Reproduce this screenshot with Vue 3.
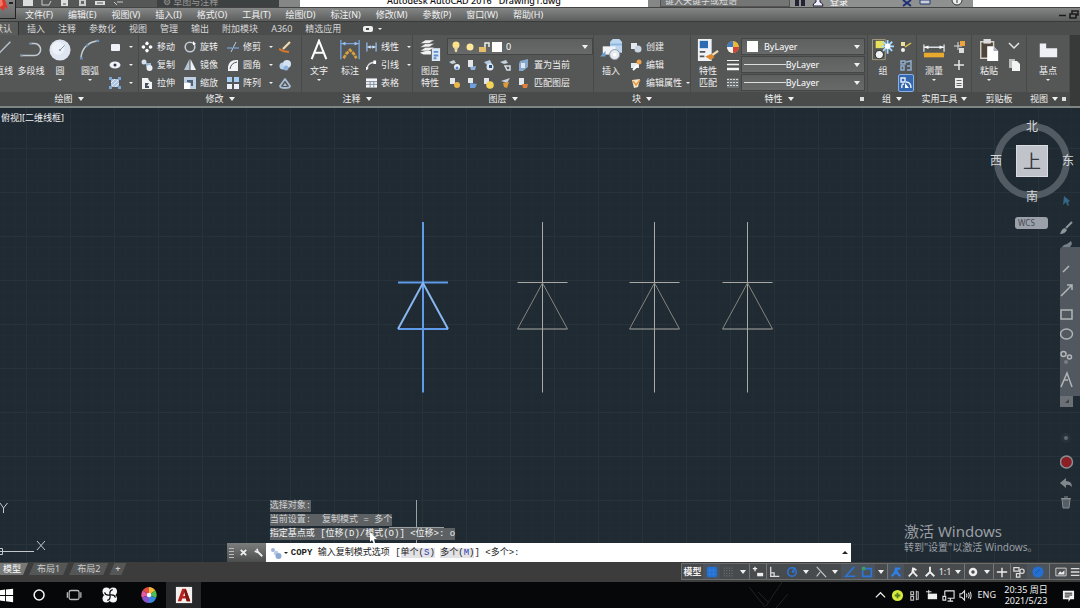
<template>
  <div class="app">
    <!-- Title bar -->
    <header class="titlebar">
      <button class="app-menu" aria-label="AutoCAD"><Icon name="acad" box="0 0 15 18" /></button>
      <div class="quick">
        <Icon v-for="n in quickIcons" :key="n" :name="n" box="0 0 12 8" />
      </div>
      <div class="workspace">⚙ 草图与注释</div>
      <div class="title-edge"></div>
      <h1 class="title">Autodesk AutoCAD 2016 &nbsp; Drawing1.dwg</h1>
      <div class="title-edge small"></div>
      <div class="search">键入关键字或短语</div>
      <div class="account">
        <Icon name="binoc" box="0 0 12 8" />
        <Icon name="user" box="0 0 12 8" />
        <span>登录</span>
        <Icon name="exchange" box="0 0 12 8" class="push" />
        <Icon name="cart" box="0 0 12 8" />
        <Icon name="help" box="0 0 12 8" class="help" />
      </div>
      <div class="window-blank"></div>
    </header>

    <nav class="menubar">
      <button v-for="m in menus" :key="m">{{ m }}</button>
      <Icon name="restore" box="0 0 22 10" class="mdi" />
    </nav>

    <nav class="tabs">
      <button v-for="(t, i) in tabs" :key="t" :class="{ active: i === 0 }">{{ t }}</button>
      <button class="tab-extra" aria-label="最小化"><Icon name="pill" box="0 0 10 6" /><i class="caret tiny"></i></button>
    </nav>

    <!-- Ribbon -->
    <section class="ribbon">
      <div v-for="p in panels" :key="p.title" class="panel" :class="p.id">
        <div class="panel-body">
          <button v-for="b in p.big" :key="b.label" class="big" :class="b.icon">
            <Icon :name="b.icon" box="0 0 24 24" />
            <span>{{ b.label }}</span>
            <i v-if="b.caret" class="caret tiny"></i>
          </button>

          <div v-if="p.id === 'layers'" class="layer-tools">
            <label class="combo">
              <Icon name="bulb" box="0 0 12 12" />
              <Icon name="sun" box="0 0 12 12" />
              <Icon name="unlock" box="0 0 12 12" />
              <i class="swatch"></i>
              <select aria-label="图层"><option>0</option></select>
              <i class="caret"></i>
            </label>
            <div v-for="(row, r) in layerRows" :key="r" class="layer-row">
              <button v-for="n in row.icons" :key="n" :aria-label="n"><Icon :name="n" box="0 0 12 12" /></button>
              <span>{{ row.label }}</span>
            </div>
          </div>

          <div v-for="(col, c) in p.cols" :key="c" class="col">
            <button v-for="s in col" :key="s.icon" class="small" :class="{ on: s.on }" :aria-label="s.label || s.icon">
              <Icon :name="s.icon" box="0 0 12 12" />
              <span v-if="s.label">{{ s.label }}</span>
              <i v-if="s.caret" class="caret tiny"></i>
            </button>
          </div>

          <div v-if="p.id === 'props'" class="prop-combos">
            <label class="combo">
              <i class="swatch"></i>
              <select aria-label="颜色"><option>ByLayer</option></select>
              <i class="caret"></i>
            </label>
            <label v-for="n in ['线宽', '线型']" :key="n" class="combo lines">
              <i class="rule"></i>
              <select :aria-label="n"><option>ByLayer</option></select>
              <i class="caret"></i>
            </label>
          </div>
        </div>
        <div class="panel-title">
          {{ p.title }}<i v-if="!p.plain" class="caret"></i>
          <Icon v-if="p.corner" name="corner" box="0 0 6 6" class="corner" />
        </div>
      </div>
      <div class="ribbon-rest"></div>
    </section>

    <!-- Model space -->
    <main class="canvas">
      <svg class="drawing" width="100%" height="100%">
        <g v-for="d in diodes" :key="d.x" :class="['diode', { selected: d.selected }]">
          <path :d="diodePath(d.x)" />
          <path class="sides" :d="sidePath(d.x)" />
        </g>
      </svg>
      <div class="view-label">俯视][二维线框]</div>

      <div class="viewcube">
        <svg class="ring" viewBox="0 0 84 84"><circle cx="42" cy="42" r="34.5" /></svg>
        <span class="n">北</span>
        <span class="w">西</span>
        <button class="top">上</button>
        <span class="e">东</span>
        <span class="s">南</span>
      </div>
      <button class="wcs">WCS</button>

      <div class="pen-tools">
        <Icon name="penTop" box="0 0 20 60" class="pen-top" />
        <Icon name="penBox" box="0 0 20 162" class="pen-box" />
        <Icon name="penLow" box="0 0 20 90" class="pen-low" />
      </div>

      <svg class="ucs" viewBox="0 0 50 60">
        <path d="M0 50.500H34M0 47.500H2.500V53.500H0M37 40l8 9M45 40l-8 9M0 2l3.500 5 4-5M3.500 7v5" />
      </svg>
      <svg class="cross" viewBox="0 0 56 46"><path d="M27.500 0V44M0 27.500H55" /></svg>

      <div class="watermark">
        <p class="wm-big">激活 Windows</p>
        <p>转到"设置"以激活 Windows。</p>
      </div>

      <div class="command">
        <div class="history">
          <p v-for="h in history" :key="h"><span>{{ h }}</span></p>
        </div>
        <div class="cmdline">
          <div class="grip"></div>
          <button class="cmd-btn" aria-label="关闭"><Icon name="close" box="0 0 10 10" /></button>
          <button class="cmd-btn" aria-label="自定义"><Icon name="wrench" box="0 0 12 12" /></button>
          <label class="cmd-input" for="cmd">
            <Icon name="copyCmd" box="0 0 12 12" />
            <i class="caret tiny dark"></i>
            <span class="prompt"><b>COPY</b> 输入复制模式选项 [<u>单个(<em>S</em>)</u> <u>多个(<em>M</em>)</u>] &lt;多个&gt;:</span>
            <input id="cmd" type="text" />
            <i class="caret up dark"></i>
          </label>
        </div>
      </div>
      <svg class="pointer" viewBox="0 0 8 12"><path d="M1 0v10l2-2 2 4 1-1-1-4h3z" /></svg>
    </main>

    <!-- Layout tabs and status bar -->
    <footer class="statusbar">
      <nav class="layouts">
        <button class="active">模型</button>
        <button>布局1</button>
        <button>布局2</button>
        <button class="add">+</button>
      </nav>
      <div class="status">
        <button v-for="(s, i) in status" :key="i" :class="[s.kind, { edge: s.edge, hot: s.hot }]" :aria-label="s.icon || s.text || '更多'">
          <Icon v-if="s.icon" :name="s.icon" box="0 0 14 14" />
          <template v-else-if="s.text">{{ s.text }}</template>
          <i v-else class="caret"></i>
        </button>
      </div>
    </footer>

    <div class="taskbar">
      <button v-for="t in tasks" :key="t" class="task" :class="t" :aria-label="t"><Icon :name="t" box="0 0 20 20" /></button>
      <svg class="streaks" viewBox="0 0 130 26"><path d="M5 5l16 20M38 0L22 24M44 12l-12 14M14 10l10 10" /></svg>
      <div class="tray">
        <Icon v-for="t in tray" :key="t" :name="t" box="0 0 14 14" />
        <span class="lang">ENG</span>
        <div class="clock">
          <span>20:35 周日</span>
          <span>2021/5/23</span>
        </div>
        <Icon name="note" box="0 0 14 14" class="note" />
      </div>
    </div>
  </div>
</template>

<script setup>
import { h } from 'vue';

const icons = {
  // title bar
  acad: '<path fill="#d8382c" d="M0 0h5l3 9-3-2-1 4-4-3z"/><path fill="#f07866" d="M0 0h2l1 5-3 2z"/><path fill="#222" d="M9 2h4v2H9z"/>',
  qNew: '<path fill="#ddd" d="M1 0h10v6H1z"/>',
  qOpen: '<path fill="none" stroke="#ccc" d="M2 0v5h7l2-4"/>',
  qSave: '<path fill="#ddd" d="M3 0h7v6H3z"/><path stroke="#555" d="M5 4h3"/>',
  qSaveAs: '<path fill="#ccc" d="M3 0h7v6H3z"/><path fill="#666" d="M5 1h3v3H5z"/>',
  qPrint: '<path fill="#ddd" d="M1 1h10v4H1z"/><path stroke="#555" d="M3 3h6"/>',
  qUndo: '<path fill="none" stroke="#ccc" d="M2 2l3 3M5 2h6"/>',
  binoc: '<path fill="none" stroke="#223" stroke-width="2" d="M2 7V1h2v6M8 7V1h2v6"/>',
  user: '<path fill="#eef" stroke="#223" d="M1 7q0-3 3-4V0h4v3q3 1 3 4z"/>',
  exchange: '<path stroke="#1d2f74" stroke-width="2" d="M2 1l8 6M10 1L2 7"/>',
  cart: '<path fill="#ccd" stroke="#223c6b" d="M1 1h10v4H1z"/>',
  help: '<circle cx="6" cy="1" r="5" fill="#eee" stroke="#333"/><path stroke="#333" d="M6 0v4"/>',
  restore: '<path fill="none" stroke="#1c1c1c" stroke-width="1.600" d="M1 5.500h7M12 4h6v4h-6zM14 3.500V1h6v4h-2"/>',
  pill: '<rect width="10" height="6" rx="2" fill="#eee"/><path fill="#444" d="M3 2h3v2H3z"/>',
  corner: '<path fill="#ddd" d="M1 1h4v4H1z"/>',
  // draw
  line: '<path stroke="#b9c4cd" stroke-width="1.500" d="M2 20L19 3"/>',
  pline: '<path fill="none" stroke="#c3ccd3" stroke-width="1.700" d="M1 18h15a6.500 6.500 0 0 0 0-13h-4"/><path stroke="#7f95aa" stroke-width="2" d="M0 18h3M10 5h3"/>',
  circle: '<circle cx="12" cy="12" r="11.500" fill="#dfe6f2"/><circle cx="10" cy="10" r="7" fill="#edf1f8"/><path stroke="#7d8da5" d="M12 12l5-5"/><circle cx="12" cy="12" r="1" fill="#7d8da5"/>',
  arc: '<path fill="none" stroke="#c3ccd3" stroke-width="1.700" d="M2 21Q4 4 21 2"/><path stroke="#6d91b5" stroke-width="2.500" d="M1 21h3M8 8l2-2M19 2h3"/>',
  rect: '<rect x="2" y="3" width="9" height="7" rx="1" fill="#eef1f6"/>',
  ellipse: '<ellipse cx="6" cy="6" rx="5.500" ry="3.500" fill="#eef1f6"/><circle cx="6" cy="6" r="1.500" fill="#334"/>',
  hatch: '<path fill="#a9c4e4" d="M2 2h8v8H2z"/><path stroke="#e6edf5" d="M2 6l4-4M3 9l6-6M6 10l4-4"/><path fill="#7ba4cf" d="M0 0h3v3H0zM9 0h3v3H9zM0 9h3v3H0zM9 9h3v3H9z"/>',
  // modify
  move: '<path fill="#e8ecf2" d="M4.500 3L6 0l1.500 3zM4.500 9L6 12l1.500-3zM3 4.500L0 6l3 1.500zM9 4.500L12 6 9 7.500z"/><circle cx="6" cy="2.500" r="1.700" fill="#fff"/><circle cx="6" cy="9.500" r="1.700" fill="#fff"/><circle cx="2.500" cy="6" r="1.700" fill="#fff"/><circle cx="9.500" cy="6" r="1.700" fill="#fff"/>',
  copy: '<circle cx="3" cy="3" r="2.500" fill="#d6dfeb"/><path fill="#96b4d6" d="M5 4h5v4H5z"/><circle cx="8.500" cy="9" r="3" fill="#e9eef5"/>',
  stretch: '<path fill="#f0f2f6" d="M1 1h6q1 4 4 4v7H1z"/><path fill="#46505c" d="M4 6h4l-2 3h2v2H4z"/>',
  rotate: '<circle cx="6" cy="6" r="4.800" fill="none" stroke="#c2cbd6" stroke-width="1.600"/><path fill="#fff" d="M9 0l3 3-3 1z"/>',
  mirror: '<path fill="#b6c5d6" d="M5.500 0v11H0z"/><path fill="#eef2f7" d="M6.500 0v11H12z"/>',
  scale: '<path fill="#bfd0e4" d="M0 0h12v12H0z"/><path fill="#4f6275" d="M3 3h6v6H7V6L3 5z"/><path fill="#fff" d="M0 6h6v6H0z"/>',
  trim: '<path stroke="#6f97c4" stroke-width="1.500" d="M0 7h5M7 7h5"/><path stroke="#b9cde5" d="M4 11L9 1"/>',
  fillet: '<path fill="#f2f4f8" d="M1 12V8q1-7 8-7h2v11z"/><path fill="none" stroke="#555" d="M3 10q1-6 7-7"/>',
  array: '<path fill="#a6cdf4" d="M0 0h5v5H0zM7 0h5v5H7z"/><path fill="#e9f0f8" d="M0 7h5v5H0zM7 7h5v5H7z"/>',
  erase: '<path stroke="#f0dcae" stroke-width="2.200" d="M4 8l7-7"/><path stroke="#d8792a" stroke-width="2" d="M0 8l4 2 6 1"/>',
  explode: '<circle cx="4" cy="7" r="3.500" fill="#b9d2ee"/><circle cx="8" cy="5" r="4" fill="#d4e2f3"/><circle cx="7" cy="9" r="2.500" fill="#8fb3da"/>',
  offset: '<path fill="none" stroke="#a9bdd2" stroke-width="1.800" stroke-linejoin="round" d="M6 2L1 9q0 2 5 2t5-2z"/><path fill="#a9bdd2" d="M6 6L4 9h4z"/>',
  // annotate
  text: '<path fill="none" stroke="#fff" stroke-width="2.200" d="M4 22L12 2l8 20M7 15h10"/>',
  dim: '<path stroke="#74a2dc" stroke-width="1.500" d="M2 1v21M22 1v21M2 5h20"/><path fill="none" stroke="#dba13f" stroke-width="3" stroke-dasharray="4 1" d="M5 21l3-5 4-4 4 4 3 5"/><path fill="#9ec3ef" d="M3 5l4-2v4zM21 5l-4-2v4z"/>',
  linear: '<path stroke="#8db4e4" stroke-width="1.500" d="M1 1v10M11 1v10M1 6h10"/><path fill="#dce8f6" d="M2 6l3-2v4zM10 6L7 4v4z"/>',
  leader: '<path fill="none" stroke="#d5dbe2" stroke-width="1.400" d="M1 11q0-7 8-8"/><path fill="#fff" d="M0 12V8l3 1zM8 1h3v4H8z"/>',
  table: '<path fill="#f2f4f7" d="M0 1h12v10H0z"/><path stroke="#7c8794" d="M0 4.500h12M0 7.500h12M4.500 4v7M8.500 4v7"/>',
  // layers
  layerProps: '<path fill="#f2f2f2" stroke="#555" stroke-width=".6" d="M1 13l6-4h10l-6 4zM1 9l6-4h10l-6 4zM1 5l6-4h10l-6 4z"/><path fill="#f2f2f2" d="M1 15l6-2h6v4H5z"/><path fill="#dce7f5" d="M14 10h9v14h-9z"/><path stroke="#5d8fca" stroke-width="2" d="M16 14h5M16 18h5M16 21h3"/>',
  bulb: '<circle cx="6" cy="4" r="3.500" fill="#ffe28a"/><path fill="#e8d7a1" d="M4 6h4l-1 5H5z"/>',
  sun: '<circle cx="6" cy="6" r="3.500" fill="#ffe89a"/>',
  unlock: '<path fill="#e5bf69" d="M1 6h7v5H1z"/><path fill="none" stroke="#eee" stroke-width="1.500" d="M7 6V2h4v4"/>',
  l1: '<path fill="#c6d1dc" d="M0 3l5-2 2 3-4 1z"/><circle cx="8" cy="8" r="3" fill="#e9eff6"/><circle cx="8" cy="9" r="1.500" fill="#4781c7"/>',
  l2: '<path fill="#e2e7ec" d="M2 1h5v7H2z"/><path fill="#8fb2dc" d="M4 8l6-1-1 4H5z"/>',
  l3: '<path fill="#b7c9de" d="M1 3l6-2 2 4-5 1z"/><circle cx="7" cy="8" r="3.500" fill="#dfe8f3"/><path fill="#27507e" d="M6 6h3v3H6z"/>',
  l4: '<path fill="#c6d1dc" d="M0 3l6-2 2 3-4 1z"/><path fill="none" stroke="#d6e0eb" stroke-width="1.500" d="M5 7h5v4H7z"/>',
  l5: '<path fill="#86a8cd" d="M3 2l8-2v8l-5 4H2V5z"/><path fill="#dce7f2" d="M4 4h4v5H4z"/>',
  l6: '<path fill="#e2e7ec" d="M1 1h5v6H1z"/><circle cx="8" cy="8" r="3" fill="#eab54b"/>',
  l7: '<path fill="#e2e7ec" d="M2 1h5v5H2z"/><path fill="#6e9edc" d="M4 6l7 1-2 4H4z"/>',
  l8: '<path fill="#dfe5eb" d="M1 1h5v6H1z"/><circle cx="7" cy="8" r="3.800" fill="#f5d359"/>',
  l9: '<path fill="#c6d1dc" d="M1 4l9-3-3 5z"/><path fill="#dd9a35" d="M3 6l6-1-2 6-3-1z"/>',
  l10: '<path fill="#e2e7ec" d="M2 1h5v7H2z"/><path fill="#df7f3e" d="M5 7h6l-1 4H6z"/>',
  // block
  insert: '<path fill="#bcd6ef" d="M11 3l3-3h7l3 3v12H11z"/><path fill="#8db7dd" d="M11 5h13v2H11z"/><path fill="#f0f3f7" d="M3 8h14v9H3z"/><path fill="#6f9fd0" d="M0 19l6-6v6z"/><circle cx="16" cy="17" r="5.500" fill="#e6e9ee" stroke="#8b95a3"/><circle cx="16" cy="17" r="2" fill="#fff"/>',
  bCreate: '<path fill="#e5eaf0" d="M1 2h6v6H1z"/><circle cx="8" cy="8" r="3.500" fill="#cbd6e3"/>',
  bEdit: '<path fill="#e5eaf0" d="M1 4h8v5H1z"/><circle cx="9" cy="3" r="2.500" fill="#f0a34c"/><path stroke="#fff" stroke-width="2" d="M3 11l5-5"/>',
  bAttr: '<path fill="#f3e6cf" d="M2 3l8-1-2 8-4 1z"/><path fill="none" stroke="#e79b3c" stroke-width="1.500" d="M3 4l3 4 4-5"/>',
  // properties
  matchProps: '<path fill="#eef2f6" d="M1 0h15v24H1z"/><path fill="#2d6cb3" d="M3 2h9v8H3z"/><path stroke="#555" stroke-width="2" d="M3 14h6M3 19h5"/><path stroke="#f0dcb4" stroke-width="2.500" d="M16 18l7-5"/><path fill="#dd8a2e" d="M9 19l7-3 3 4-4 3z"/>',
  wheel: '<circle cx="6" cy="6" r="6" fill="#e8ba3a"/><path fill="#3f76c5" d="M6 6H0a6 6 0 0 1 6-6z"/><path fill="#cb4639" d="M6 6h6a6 6 0 0 1-6 6z"/><path fill="#f3f3f3" d="M6 6v6a6 6 0 0 1-6-6z"/>',
  weights: '<path stroke="#f4f4f4" d="M0 1.500h12"/><path stroke="#f4f4f4" stroke-width="1.600" d="M0 5.500h12"/><path stroke="#f4f4f4" stroke-width="2.500" d="M0 10h12"/>',
  ltypes: '<path fill="#6c7274" d="M0 1h12v10H0z"/><path stroke="#d7dada" stroke-dasharray="2 1" d="M0 2.500h12M0 5.500h12M0 8.500h12"/>',
  // group
  group: '<path fill="none" stroke="#aaa17e" d="M.5.500h14v22H.5z"/><path fill="#e8e15a" d="M4 2h9v8H4z"/><circle cx="8" cy="17" r="4.500" fill="#f0f2f5" stroke="#222"/><path stroke="#a8dcff" stroke-width="2" d="M17 1v15M10 8h14M12 3l10 10M22 3L12 13"/><circle cx="17" cy="8" r="3" fill="#fff"/>',
  ungroup: '<path fill="#e8e1a0" d="M1 1h4v4H1z"/><path stroke="#e2c24d" stroke-width="1.500" d="M5 6l6-4"/><circle cx="3" cy="9" r="2" fill="#f2f2f2"/>',
  groupEdit: '<path fill="none" stroke="#8faed0" stroke-width="1.500" d="M1 2h4v3H1zM6 3l5-1v4M7 7h4v4H7M1 7h3v4H1z"/>',
  groupSel: '<path fill="none" stroke="#e6eefa" stroke-width="1.400" d="M1 1h4v4H1zM2 11q-1-4 2-4M6 5q5 0 5 6"/><path fill="#fff" d="M5 6l4 5H5z"/>',
  // utilities, clipboard, view
  measure: '<path stroke="#d7dde2" stroke-width="1.500" d="M1 6v8M23 6v8M1 9h22"/><path fill="#fff" d="M1 9l5-2v4zM23 9l-5-2v4z"/><path fill="#e9a92f" d="M1 15h22v5H1z"/>',
  quickSel: '<path stroke="#ddd" d="M5 1v8M1 5h8"/><path fill="#eda23d" d="M7 0h5v5H7z"/><path fill="#ddd" d="M6 7h5v5H6z"/>',
  point: '<path stroke="#e6e6e6" stroke-width="1.500" d="M6 1v10M1 6h10"/>',
  calc: '<path fill="#eee" d="M2 1h8v10H2z"/><path stroke="#666" d="M3.500 3.500h5M3.500 6.500h5M3.500 8.500h5"/>',
  paste: '<path fill="#4f473b" stroke="#d7d2c7" stroke-width="1.500" d="M3 3h14v18H3z"/><path fill="#ddd" d="M6 0h8v5H6z"/><path fill="#fff" d="M10 8h7l5 5v11H10z"/><path fill="#aab" d="M17 8v5h5z"/>',
  cut: '<path fill="none" stroke="#e3e3e3" stroke-width="1.500" d="M1 2l5 5 5-5"/>',
  copyClip: '<path fill="#bbb" d="M1 0h6v9H1z"/><path fill="#f3f3f3" d="M4 2h5l3 3v7H4z"/>',
  base: '<path fill="#eef0f3" d="M3 5h7v5h12v10H3z"/>',
  // command line
  close: '<path stroke="#eee" stroke-width="2" d="M2 2l6 6M8 2L2 8"/>',
  wrench: '<path fill="none" stroke="#eee" stroke-width="2.400" d="M11 11L5 5M5 6L1 4M5 5L4 1"/>',
  copyCmd: '<circle cx="3" cy="3" r="2" fill="#9db5da"/><circle cx="6" cy="6" r="2.300" fill="#b9cbe5"/><circle cx="8.500" cy="9" r="3" fill="#8aa8d2"/>',
  // pen toolbar
  penTop: '<path fill="#356884" d="M4 4l6 5-2 1 1 4-2-1-1-3-3 3z"/><path fill="#8f969a" d="M0 42q2-6 5-6l2 2q-2 4-7 4z"/><path stroke="#8f969a" stroke-width="2" d="M6 36l6-6"/><path fill="#75808a" d="M1 60q0-5 3-7l3-1 4-3 1 3-4 6z"/>',
  penBox: '<path fill="#52585f" d="M0 3q0-3 3-3h17v149H0z"/><path fill="#6a7075" d="M0 149h13v11H0z"/><g fill="none" stroke="#b1b5b8" stroke-width="1.500"><path d="M3 25l6-6M1 49L12 38M7 38h5v5M1 63h11v9H1z"/><ellipse cx="6.500" cy="87" rx="6" ry="5"/><circle cx="3.500" cy="107" r="2.500"/><circle cx="9.500" cy="110" r="2"/><path d="M1 140l6-14 5 14M4 133h4"/></g><circle cx="6" cy="115" r="2" fill="#777e84"/><path fill="#3c4146" d="M5 156l4-4v4z"/>',
  penLow: '<circle cx="6" cy="10" r="5" fill="#29323b"/><circle cx="6" cy="10" r="2" fill="#626b72"/><circle cx="6.500" cy="34" r="6" fill="#8b1f26" stroke="#8b8e91" stroke-width="1.500"/><path fill="#81888d" d="M0 55l6-5v3q6 0 6 6-3-3-6-2v3z"/><path fill="#555e65" stroke="#858b90" d="M2 71h8l-1 9H3zM1 70.500h10M4 69h4"/>',
  // status bar
  snapGrid: '<rect x="1" y="1" width="12" height="12" rx="2" fill="#2470cf"/><path stroke="#3380dd" d="M4.500 2v10M8.500 2v10M2 5.500h10M2 9.500h10"/>',
  dots: '<path stroke="#8b8f91" stroke-dasharray="1 2" d="M1 2.500h12M1 5.500h12M1 8.500h12M1 11.500h12"/>',
  dyn: '<path stroke="#eee" stroke-width="1.500" d="M1 3h5M3.500 1v5"/><path fill="#eee" d="M6 8h7v4H6z"/>',
  ortho: '<path fill="none" stroke="#ddd" stroke-width="1.500" d="M2 1v11h10M2 8h4v4"/>',
  polar: '<circle cx="7" cy="7" r="5" fill="none" stroke="#2b76d8" stroke-width="1.800"/><path stroke="#2b76d8" stroke-width="1.800" d="M7 7h3M7 7l4-5"/>',
  iso: '<path stroke="#ccc" stroke-width="1.300" d="M2 1l11 12M6 7L2 12"/>',
  track: '<path fill="none" stroke="#2b76d8" stroke-width="1.800" d="M12 1L2 12h11"/>',
  osnap: '<path fill="none" stroke="#2b76d8" stroke-width="2" d="M2 3h10v9H2z"/><path fill="#3d9a62" d="M1 1h4v4H1z"/>',
  annoBlue: '<path fill="none" stroke="#2f80ea" stroke-width="2.500" d="M2 12l4-4 1-6 1 6 4 4M4 8h6M8 3h4"/>',
  anno: '<path fill="none" stroke="#eee" stroke-width="2" d="M2 12l4-4 1-6 1 6 4 4M8 3l3 2"/>',
  person: '<path fill="none" stroke="#eee" stroke-width="2.200" d="M7 1v6l-5 5M7 7l5 5"/>',
  gear: '<circle cx="7" cy="7" r="3.500" fill="none" stroke="#eee" stroke-width="3"/>',
  plus: '<path stroke="#eee" stroke-width="1.600" d="M7 2v11M1 7h12"/>',
  units: '<path fill="none" stroke="#ddd" stroke-width="1.400" d="M1 2h6v4H1zM4 9h4v4H4z"/><circle cx="10.500" cy="6" r="2.500" fill="none" stroke="#ddd" stroke-width="1.400"/>',
  hw: '<circle cx="7" cy="7" r="6.500" fill="#2470d2"/><path stroke="#174d94" d="M4 9l5-5"/>',
  screen: '<path fill="#505356" stroke="#ddd" d="M1 2.500h12v9H1z"/><path fill="#eee" d="M3 10l3-4 2 2 3-3v5z"/>',
  custom: '<path stroke="#ddd" stroke-width="1.500" d="M1 3h10M1 7h10M1 11h10"/>',
  // taskbar
  win: '<path fill="#fff" d="M3 5l7-1v6H3zM11 4l8-1v7h-8zM3 11h7v6l-7-1zM11 11h8v7l-8-1z"/>',
  cortana: '<circle cx="9" cy="10" r="5.500" fill="none" stroke="#f4f4f4" stroke-width="1.700"/>',
  taskview: '<rect x="3.500" y="5" width="11" height="10" rx="2" fill="none" stroke="#bbb" stroke-width="1.400"/><path stroke="#bbb" stroke-width="1.400" d="M1.500 7v6M16.500 7v6"/>',
  fan: '<g fill="#f5f5f5"><circle cx="6" cy="6" r="4.300"/><circle cx="13.500" cy="6" r="4.300"/><circle cx="6" cy="14" r="4.300"/><circle cx="13.500" cy="14" r="4.300"/><circle cx="10" cy="10" r="4"/></g><path fill="none" stroke="#050708" stroke-width="1.300" d="M10 10Q5 11 4 7M10 10q-1-5 3-6M10 10q5-1 6 3M10 10q1 5-3 6"/>',
  color: '<path fill="#e34d45" d="M10 10L3 5a9 9 0 0 1 7-4z"/><path fill="#efbb35" d="M10 10V1a9 9 0 0 1 7 4z"/><path fill="#e35aa0" d="M10 10L3 5a9 9 0 0 0-1 8z"/><path fill="#8853c9" d="M10 10l-8 3a9 9 0 0 0 8 6z"/><path fill="#3488df" d="M10 10v9a9 9 0 0 0 8-6z"/><path fill="#53bd59" d="M10 10l7-5a9 9 0 0 1 1 8z"/><circle cx="10" cy="10" r="2.500" fill="#f7f7f7"/>',
  autocad: '<path fill="#f4f0ee" d="M1 1h18v18H1z"/><path fill="#b8241f" d="M3 17L8 3h4l5 14h-4l-1-3H8l-1 3zM9 11h3l-1-5z"/><path fill="#7e1512" d="M12 3l5 14h-4l-3-11z"/>',
  up: '<path fill="none" stroke="#eee" stroke-width="1.300" d="M2 9l5-5 5 5"/>',
  safe: '<circle cx="7" cy="7" r="6" fill="#d9e83c"/><path fill="#547b20" d="M6 4h2v2h2v2H8v2H6V8H4V6h2z"/>',
  bt: '<path fill="none" stroke="#bbb" stroke-width="1.200" d="M3 3h3v3H3zM3 8h3v4H3zM9 2v10M9 3h2v8H9"/>',
  battery: '<path fill="#eee" d="M3 5h10v6H3z"/><path fill="none" stroke="#eee" d="M1 3h6M4 1v4"/>',
  net: '<path fill="none" stroke="#e5e5e5" stroke-width="1.200" d="M3 2h10v8H6M3 2v5M9 10v3M6 13h6M1 8h3v4H1z"/>',
  sound: '<path fill="none" stroke="#e5e5e5" stroke-width="1.100" d="M1 5h2l3-3v10L3 9H1zM8 5q1 2 0 4M10 4q2 3 0 6M12 3q2 4 0 8"/>',
  note: '<path fill="#f4f4f4" d="M1 2h12v9H9l-2 3v-3H1z"/><path stroke="#111" d="M3 4.500h8M3 6.500h8M3 8.500h5"/>'
};

const Icon = (props) => h('svg', { viewBox: props.box, class: 'icon', 'aria-hidden': 'true', innerHTML: icons[props.name] });
Icon.props = ['name', 'box'];

const quickIcons = ['qNew', 'qOpen', 'qSave', 'qSaveAs', 'qPrint', 'qUndo'];
const menus = ['文件(F)', '编辑(E)', '视图(V)', '插入(I)', '格式(O)', '工具(T)', '绘图(D)', '标注(N)', '修改(M)', '参数(P)', '窗口(W)', '帮助(H)'];
const tabs = ['默认', '插入', '注释', '参数化', '视图', '管理', '输出', '附加模块', 'A360', '精选应用'];

const panels = [
  {
    id: 'draw', title: '绘图',
    big: [
      { icon: 'line', label: '直线' },
      { icon: 'pline', label: '多段线' },
      { icon: 'circle', label: '圆', caret: true },
      { icon: 'arc', label: '圆弧', caret: true }
    ],
    cols: [[{ icon: 'rect', caret: true }, { icon: 'ellipse', caret: true }, { icon: 'hatch', caret: true }]]
  },
  {
    id: 'modify', title: '修改',
    cols: [
      [{ icon: 'move', label: '移动' }, { icon: 'copy', label: '复制' }, { icon: 'stretch', label: '拉伸' }],
      [{ icon: 'rotate', label: '旋转' }, { icon: 'mirror', label: '镜像' }, { icon: 'scale', label: '缩放' }],
      [{ icon: 'trim', label: '修剪', caret: true }, { icon: 'fillet', label: '圆角', caret: true }, { icon: 'array', label: '阵列', caret: true }],
      [{ icon: 'erase' }, { icon: 'explode' }, { icon: 'offset' }]
    ]
  },
  {
    id: 'annotate', title: '注释',
    big: [{ icon: 'text', label: '文字', caret: true }, { icon: 'dim', label: '标注' }],
    cols: [[{ icon: 'linear', label: '线性', caret: true }, { icon: 'leader', label: '引线', caret: true }, { icon: 'table', label: '表格' }]]
  },
  { id: 'layers', title: '图层', big: [{ icon: 'layerProps', label: '图层 特性' }] },
  {
    id: 'block', title: '块',
    big: [{ icon: 'insert', label: '插入' }],
    cols: [[{ icon: 'bCreate', label: '创建' }, { icon: 'bEdit', label: '编辑' }, { icon: 'bAttr', label: '编辑属性', caret: true }]]
  },
  {
    id: 'props', title: '特性', corner: true,
    big: [{ icon: 'matchProps', label: '特性 匹配' }],
    cols: [[{ icon: 'wheel' }, { icon: 'weights' }, { icon: 'ltypes' }]]
  },
  {
    id: 'group', title: '组',
    big: [{ icon: 'group', label: '组' }],
    cols: [[{ icon: 'ungroup' }, { icon: 'groupEdit' }, { icon: 'groupSel', on: true }]]
  },
  {
    id: 'utils', title: '实用工具',
    big: [{ icon: 'measure', label: '测量', caret: true }],
    cols: [[{ icon: 'quickSel' }, { icon: 'point' }, { icon: 'calc' }]]
  },
  {
    id: 'clip', title: '剪贴板', plain: true,
    big: [{ icon: 'paste', label: '粘贴', caret: true }],
    cols: [[{ icon: 'cut' }, { icon: 'copyClip' }]]
  },
  { id: 'view', title: '视图', corner: true, big: [{ icon: 'base', label: '基点', caret: true }] }
];

const layerRows = [
  { icons: ['l1', 'l2', 'l3', 'l4', 'l5'], label: '置为当前' },
  { icons: ['l6', 'l7', 'l8', 'l9', 'l10'], label: '匹配图层' }
];

const diodes = [{ x: 423, selected: true }, { x: 542.5 }, { x: 654.5 }, { x: 747.5 }];
const diodePath = (x) => `M${x} 114V284.500M${x - 25} 174.500h50M${x - 25} 221h50`;
const sidePath = (x) => `M${x - 25} 221L${x} 175l25 46`;

const history = ['选择对象:', '当前设置:  复制模式 = 多个', '指定基点或 [位移(D)/模式(O)] <位移>: o'];

const status = [
  { text: '模型', kind: 'word' },
  { icon: 'snapGrid', kind: 'tool', hot: true },
  { icon: 'dots', kind: 'tool' },
  { kind: 'drop' },
  { icon: 'dyn', kind: 'tool', edge: true },
  { icon: 'ortho', kind: 'tool', edge: true },
  { icon: 'polar', kind: 'tool' },
  { kind: 'drop' },
  { icon: 'iso', kind: 'tool' },
  { kind: 'drop' },
  { icon: 'track', kind: 'tool', hot: true },
  { icon: 'osnap', kind: 'tool', hot: true },
  { kind: 'drop' },
  { icon: 'annoBlue', kind: 'tool', edge: true, hot: true },
  { icon: 'anno', kind: 'tool' },
  { icon: 'person', kind: 'tool' },
  { text: '1:1', kind: 'ratio' },
  { kind: 'drop' },
  { icon: 'gear', kind: 'tool', edge: true },
  { kind: 'drop' },
  { icon: 'plus', kind: 'tool', edge: true },
  { icon: 'units', kind: 'tool', edge: true },
  { icon: 'hw', kind: 'tool wide', hot: true },
  { icon: 'screen', kind: 'tool wide', edge: true },
  { icon: 'custom', kind: 'last' }
];

const tasks = ['win', 'cortana', 'taskview', 'fan', 'color', 'autocad'];
const tray = ['up', 'safe', 'bt', 'battery', 'net', 'sound'];
</script>

<style>
body {
  background: #202a33;
}
</style>

<style scoped>
.app {
  display: flex;
  flex-direction: column;
  height: 100vh;
  overflow: hidden;
  font-family: "Noto Sans", "Noto Sans CJK SC", sans-serif;
  font-size: 9px;
  line-height: 12px;
  color: #f0f0f0;
}

button {
  display: flex;
  align-items: center;
  padding: 0;
  border: 0;
  background: none;
  color: inherit;
  font: inherit;
  white-space: nowrap;
}

p, h1 {
  margin: 0;
}

.icon {
  display: block;
  flex: none;
  width: 12px;
  height: 12px;
}

.caret {
  flex: none;
  width: 0;
  height: 0;
  border: 3px solid transparent;
  border-top: 4px solid #f0f0f0;
  border-bottom: 0;
}

.caret.tiny {
  border-width: 2px;
  border-top-width: 2px;
  border-bottom: 0;
}

.caret.dark {
  border-top-color: #222;
}

.caret.up {
  border-top: 0;
  border-bottom: 3px solid #222;
}

/* Title bar */
.titlebar {
  display: flex;
  flex: none;
  height: 7px;
  background: #8f9190;
  color: #ddd;
}

.titlebar .icon {
  height: 8px;
}

.app-menu {
  position: relative;
  z-index: 2;
  flex: none;
  width: 16px;
  height: 19px;
  border-right: 1px solid #222;
  border-bottom: 1px solid #222;
  box-sizing: border-box;
  background: linear-gradient(#858787, #666868);
}

.titlebar .app-menu .icon {
  width: 15px;
  height: 18px;
}

.quick {
  display: flex;
  gap: 6px;
  flex: none;
  width: 141px;
  padding-left: 6px;
  box-sizing: border-box;
  overflow: hidden;
  background: #555756;
}

.workspace {
  display: flex;
  align-items: flex-end;
  flex: none;
  width: 122px;
  padding-left: 6px;
  box-sizing: border-box;
  overflow: hidden;
  background: #3e4141;
  color: #999;
  line-height: 11px;
}

.title-edge {
  flex: none;
  width: 21px;
  background: #858786;
}

.title-edge.small {
  width: 8px;
}

.title {
  display: flex;
  flex: 1;
  align-items: flex-end;
  justify-content: center;
  overflow: hidden;
  background: #fff;
  color: #111;
  font-size: 9px;
  font-weight: 500;
  line-height: 12px;
  height: 7px;
  white-space: nowrap;
}

.search {
  display: flex;
  align-items: flex-end;
  flex: none;
  width: 130px;
  padding-left: 4px;
  box-sizing: border-box;
  overflow: hidden;
  border: 1px solid #555;
  border-top: 0;
  background: #747676;
  line-height: 10px;
}

.account {
  display: flex;
  align-items: flex-end;
  gap: 6px;
  flex: none;
  width: 183px;
  padding: 0 4px;
  box-sizing: border-box;
  overflow: hidden;
}

.account span {
  line-height: 11px;
  color: #fff;
}

.account .push {
  margin-left: auto;
}

.account .help {
  margin: 0 6px 0 14px;
}

.window-blank {
  flex: none;
  width: 107px;
  background: #fff;
}

/* Menus */
.menubar {
  display: flex;
  flex: none;
  align-items: center;
  gap: 15px;
  height: 15px;
  padding-left: 25px;
  border-top: 1px solid #444;
  border-bottom: 1px solid #3a3c3c;
  box-sizing: border-box;
  background: linear-gradient(#858786, #5c5e5e);
}

.mdi {
  width: 22px;
  height: 10px;
  margin-left: auto;
}

.tabs {
  display: flex;
  flex: none;
  align-items: center;
  gap: 13px;
  height: 13px;
  background: #4b4d4d;
  color: #d8d8d8;
}

.tabs button:first-child {
  margin-left: -6px;
}

.tabs .active {
  height: 13px;
  margin-right: -5px;
  padding-right: 6px;
  border-right: 1px solid #2f3131;
  background: #5a5c5b;
}

.tab-extra {
  gap: 5px;
  margin-left: 9px;
}

.tab-extra .icon {
  width: 10px;
  height: 6px;
}

/* Ribbon */
.ribbon {
  display: grid;
  grid-template-columns: 139fr 163fr 111fr 181fr 97fr 177fr 49fr 55fr 55fr 43fr 10fr;
  flex: none;
  height: 73px;
  border-bottom: 2px solid #7d8682;
  box-sizing: border-box;
  background: #555756;
}

.panel {
  display: flex;
  flex-direction: column;
  min-width: 0;
  border-right: 1px solid #484a4a;
}

.panel-body {
  display: flex;
  flex: 1;
  padding-top: 3px;
}

.panel-title {
  position: relative;
  display: flex;
  align-items: center;
  justify-content: center;
  gap: 5px;
  height: 14px;
  background: #494b4a;
  white-space: nowrap;
}

.corner {
  position: absolute;
  right: 2px;
  width: 6px;
  height: 6px;
}

.view .panel-title {
  gap: 4px;
  padding-right: 8px;
}

.utils .panel-title {
  gap: 3px;
}

.ribbon-rest {
  background: #383a3a;
}

.big {
  flex-direction: column;
  flex: none;
  width: 34px;
  padding-top: 1px;
  line-height: 12px;
}

.big .icon {
  width: 22px;
  height: 22px;
  margin-bottom: 4px;
}

.big .caret {
  margin-top: 2px;
}

.big.line {
  width: 24px;
  margin-left: -8px;
}

.big.pline {
  width: 30px;
}

.big.circle, .big.dim {
  width: 28px;
}

.big.layerProps span, .big.matchProps span {
  width: 18px;
  white-space: normal;
}

.big.group {
  width: 30px;
}

.big.base {
  width: 42px;
}

.col {
  display: flex;
  flex-direction: column;
  flex: none;
}

.small {
  height: 18px;
  gap: 4px;
  padding: 0 2px;
}

.small .caret {
  margin-left: 4px;
}

.block .small .caret {
  margin-left: 0;
}

.small.on {
  border: 1px solid #89b1e8;
  border-radius: 2px;
  padding: 0 1px;
  box-sizing: border-box;
  background: #3467ae;
}

.draw .big.arc {
  width: 32px;
}

.draw .small {
  padding-left: 3px;
}

.modify .col {
  width: 43px;
}

.modify .col:nth-child(3) {
  width: 52px;
}

.annotate .small .icon {
  width: 11px;
}

.layer-tools {
  flex: 1;
  min-width: 0;
}

.layer-row {
  display: flex;
  align-items: center;
  height: 18px;
  padding-left: 2px;
}

.layer-row button {
  width: 17px;
}

.combo {
  display: flex;
  align-items: center;
  height: 17px;
  margin-bottom: 1px;
  padding: 0 4px 0 2px;
  border: 1px solid #444646;
  box-sizing: border-box;
  background: linear-gradient(#5e6060, #686a6a);
}

.combo .icon {
  margin-right: 2px;
}

.combo select {
  flex: 1;
  min-width: 0;
  padding: 0;
  border: 0;
  background: none;
  color: #fff;
  appearance: none;
  font: inherit;
}

.swatch {
  flex: none;
  width: 10px;
  height: 10px;
  margin-right: 4px;
  background: #fff;
}

.prop-combos {
  flex: 1;
  min-width: 0;
  margin-right: 2px;
}

.prop-combos .combo {
  font-size: 9px;
}

.prop-combos .swatch {
  margin: 0 6px 0 3px;
  width: 11px;
  height: 11px;
}

.rule {
  flex: none;
  width: 36%;
  height: 1px;
  background: #ddd;
}

/* Model space */
.canvas {
  position: relative;
  flex: 1;
  min-height: 0;
  overflow: hidden;
  background-color: #202a33;
  background-image:
    linear-gradient(90deg, #27323b 1px, transparent 1px),
    linear-gradient(#27323b 1px, transparent 1px),
    linear-gradient(90deg, #212c35 1px, transparent 1px),
    linear-gradient(#212c35 1px, transparent 1px);
  background-size: 44px 44px, 44px 44px, 11px 11px, 11px 11px;
  background-position: 26px 40px;
}

.drawing {
  position: absolute;
  inset: 0;
}

.diode path {
  fill: none;
  stroke: #a9a9a5;
  stroke-width: 1;
}

.diode .sides {
  stroke: #85867d;
}

.diode.selected path {
  stroke: #5f9be8;
  stroke-width: 2;
}

.diode.selected .sides {
  stroke: #88b6ee;
}

.view-label {
  position: absolute;
  top: 4px;
  left: 1px;
}

.viewcube {
  position: absolute;
  top: 11px;
  right: 6px;
  display: grid;
  grid-template: "a n b" 24px "w t e" 36px "c s d" 24px / 24px 36px 24px;
  place-items: center;
  font-size: 12px;
  color: #d5d8da;
}

.ring {
  position: absolute;
  inset: 0;
}

.ring circle {
  fill: none;
  stroke: #535b62;
  stroke-width: 7;
}

.viewcube span {
  position: relative;
}

.n {
  grid-area: n;
  align-self: start;
  padding-top: 2px;
}

.s {
  grid-area: s;
  align-self: end;
}

.w {
  grid-area: w;
  justify-self: start;
}

.e {
  grid-area: e;
  justify-self: end;
}

.top {
  grid-area: t;
  justify-content: center;
  width: 32px;
  height: 32px;
  border: 1px solid #dadbe0;
  background: #c0c3c9;
  color: #343a40;
  font-size: 18px;
}

.wcs {
  position: absolute;
  top: 109px;
  right: 32px;
  width: 33px;
  height: 12px;
  padding-left: 3px;
  border-radius: 3px;
  background: #9ca1a9;
  color: #444c55;
  font-size: 8px;
}

.pen-tools {
  position: absolute;
  top: 84px;
  right: 0;
  display: flex;
  flex-direction: column;
  width: 20px;
}

.pen-tools .icon {
  width: 20px;
  height: 60px;
}

.pen-tools .pen-box {
  height: 162px;
  margin-top: -5px;
}

.pen-tools .pen-low {
  height: 90px;
  margin-top: 19px;
}

.ucs {
  position: absolute;
  left: 0;
  bottom: 1px;
  width: 50px;
  height: 60px;
  fill: none;
  stroke: #c3c8cc;
}

.cross {
  position: absolute;
  left: 389px;
  bottom: 16px;
  width: 56px;
  height: 46px;
  stroke: #9ba0a3;
}

.pointer {
  position: absolute;
  left: 369px;
  bottom: 18px;
  width: 8px;
  height: 12px;
  fill: #fff;
}

.watermark {
  position: absolute;
  right: 38px;
  bottom: 8px;
  width: 138px;
  color: #9a9fa3;
  font-size: 10px;
  line-height: 14px;
  white-space: nowrap;
}

.wm-big {
  font-size: 15px;
  line-height: 18px;
}

/* Command line */
.command {
  position: absolute;
  left: 21%;
  right: 21.2%;
  bottom: 0;
  font-family: "Liberation Mono", "Noto Sans CJK SC", monospace;
}

.history {
  padding-left: 43px;
  margin-bottom: 2px;
}

.history p {
  display: flex;
  height: 14px;
  align-items: center;
  line-height: 12px;
  white-space: pre;
}

.history span {
  background: #5d6163;
  color: #d0d2d2;
}

.history p:last-child span {
  color: #f4f4f4;
}

.cmdline {
  display: flex;
  height: 19px;
  background: linear-gradient(#7c7e7e, #4b4d4d);
}

.grip {
  width: 5px;
  margin: 5px 3px 2px 2px;
  background: repeating-linear-gradient(#bbb 0 1px, transparent 1px 3px);
}

.cmd-btn {
  width: 14px;
  justify-content: center;
}

.cmd-btn:nth-child(3) {
  width: 15px;
}

.cmd-btn .icon {
  width: 9px;
  height: 9px;
}

.cmd-input {
  display: flex;
  flex: 1;
  align-items: center;
  min-width: 0;
  gap: 2px;
  padding: 0 3px 0 4px;
  background: #fff;
  color: #1c1c1c;
}

.prompt {
  flex: none;
  margin-left: 1px;
  white-space: pre;
}

.prompt u {
  background: #e2e2e6;
  text-decoration: none;
}

.prompt em {
  color: #2a3bb0;
  font-style: normal;
}

.cmd-input input {
  flex: 1;
  min-width: 0;
  padding: 0;
  border: 0;
  outline: 0;
  background: none;
  font: inherit;
}

/* Status bar */
.statusbar {
  display: flex;
  flex: none;
  justify-content: space-between;
  height: 20px;
  background: #3b3c3b;
}

.layouts {
  display: flex;
  gap: 1px;
  padding-top: 1px;
}

.layouts button {
  height: 12px;
  padding: 0 8px;
  background: #555756;
  color: #ccc;
  clip-path: polygon(5px 0, 100% 0, calc(100% - 5px) 100%, 0 100%);
}

.layouts .active {
  width: 28px;
  padding: 0 0 0 3px;
  background: #777978;
  color: #fff;
  clip-path: polygon(0 0, 100% 0, calc(100% - 5px) 100%, 0 100%);
}

.layouts .add {
  padding: 0 6px;
  font-weight: 700;
}

.status {
  display: flex;
  align-items: center;
  height: 17px;
  margin-top: 1px;
  border: 1px solid #6b6d6d;
  border-right: 0;
  box-sizing: border-box;
  background: #484b4d;
}

.status button {
  justify-content: center;
  height: 15px;
}

.status .word {
  width: 21px;
  font-weight: 700;
}

.status .tool {
  width: 17px;
}

.status .wide {
  width: 22px;
}

.status .drop {
  width: 12px;
}

.status .last {
  width: 9px;
}

.status .ratio {
  width: 14px;
}

.status .edge {
  border-left: 1px solid #777;
}

.status .hot {
  background: #4b535d;
}

/* Taskbar */
.taskbar {
  display: flex;
  flex: none;
  height: 26px;
  background: #050708;
}

.task {
  justify-content: center;
  width: 35px;
}

.task.win {
  margin-left: -13px;
}

.task.color {
  margin-left: 4px;
}

.task.autocad {
  background: #262829;
}

.task .icon {
  width: 18px;
  height: 18px;
}

.streaks {
  width: 130px;
  height: 26px;
  margin-left: auto;
  fill: none;
  stroke: #202522;
}

.tray {
  display: flex;
  flex: none;
  align-items: center;
  gap: 4px;
}

.tray .icon {
  width: 13px;
  height: 13px;
}

.lang {
  margin-left: 2px;
}

.clock {
  display: flex;
  flex-direction: column;
  width: 44px;
  margin-left: 4px;
  line-height: 11px;
  text-align: center;
  white-space: nowrap;
}

.tray .note {
  margin: 0 5px 0 10px;
}
</style>
